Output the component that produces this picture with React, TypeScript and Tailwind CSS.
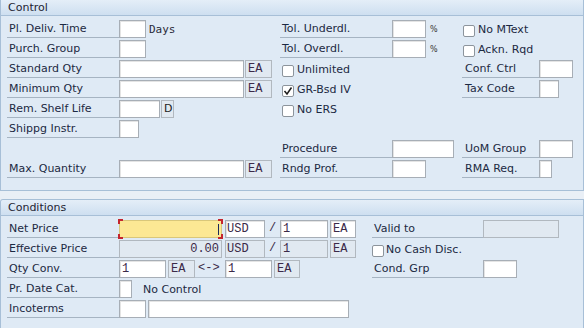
import React from "react";

const LBL = "h-[18px] border-b border-[#a6b4c2] pl-[2px] pt-[1px] leading-[16px] whitespace-nowrap";
const INP = "h-[18px] bg-white border border-[#a7aeb6] shadow-[inset_1px_1px_0_#e4e4e4]";
const GRY = "h-[18px] bg-[#e1e9f1] border border-[#b1b8bf]";
const MONO = "font-['Liberation_Mono',monospace] text-[12px] leading-[16px] text-[#3b2a48]";
const TXT = "pt-[1px] leading-[17px] whitespace-nowrap";

function Check({ checked = false, cls = "" }: { checked?: boolean; cls?: string }) {
  return (
    <span className={"mt-[5px] w-[12px] h-[12px] bg-white border border-[#8c949c] rounded-[2px] flex items-center justify-center " + cls}>
      {checked && (
        <svg width="10" height="10" viewBox="0 0 10 10">
          <polyline points="1.5,5 4,8 8.5,1.5" fill="none" stroke="#1d1d1d" strokeWidth="1.5" />
        </svg>
      )}
    </span>
  );
}

function Row({ children }: { children: React.ReactNode }) {
  return <div className="flex h-[18px] mb-[2px]">{children}</div>;
}

function Header({ title, top = false }: { title: string; top?: boolean }) {
  return (
    <div
      className={
        "h-[16px] bg-gradient-to-b from-[#e4eef8] to-[#cedff0] border-b border-[#a7bfd7] pl-[7px] pt-[1px] leading-[14px] text-[#1e2433] " +
        (top ? "" : "rounded-tl-[3px]")
      }
    >
      {title}
    </div>
  );
}

export default function App() {
  return (
    <div className="w-[584px] h-[328px] overflow-hidden bg-[#e9eff6] text-[11px] text-[#1c2942] font-['DejaVu_Sans',sans-serif]">
      {/* Control panel */}
      <div className="bg-[#dfeaf5] border-l border-r border-b border-[#a7bfd7]">
        <Header title="Control" top />
        <div className="pt-[4px] pb-[10px] pl-[6px]">
          {/* Row 1 */}
          <Row>
            <div className="flex w-[273px]">
              <div className={LBL + " w-[112px]"}>Pl. Deliv. Time</div>
              <div className={INP + " w-[27px]"} />
              <div className="ml-[3px] pt-[1px] font-['DejaVu_Sans_Mono',monospace] text-[11px] leading-[17px] text-[#2a2a3a]">Days</div>
            </div>
            <div className="flex w-[182px]">
              <div className={LBL + " w-[112px]"}>Tol. Underdl.</div>
              <div className={INP + " w-[34px]"} />
              <div className="ml-[4px] pt-[1px] text-[8px] leading-[17px] text-[#333]">%</div>
            </div>
            <div className="flex">
              <Check cls="ml-[1px]" />
              <span className={"ml-[3px] " + TXT}>No MText</span>
            </div>
          </Row>
          {/* Row 2 */}
          <Row>
            <div className="flex w-[273px]">
              <div className={LBL + " w-[112px]"}>Purch. Group</div>
              <div className={INP + " w-[27px]"} />
            </div>
            <div className="flex w-[182px]">
              <div className={LBL + " w-[112px]"}>Tol. Overdl.</div>
              <div className={INP + " w-[34px]"} />
              <div className="ml-[4px] pt-[1px] text-[8px] leading-[17px] text-[#333]">%</div>
            </div>
            <div className="flex">
              <Check cls="ml-[1px]" />
              <span className={"ml-[3px] " + TXT}>Ackn. Rqd</span>
            </div>
          </Row>
          {/* Row 3 */}
          <Row>
            <div className="flex w-[273px]">
              <div className={LBL + " w-[112px]"}>Standard Qty</div>
              <div className={INP + " w-[125px]"} />
              <div className={GRY + " ml-[1px] w-[27px] pl-[2px] " + MONO}>EA</div>
            </div>
            <div className="flex w-[182px]">
              <Check cls="ml-[2px]" />
              <span className={"ml-[3px] " + TXT}>Unlimited</span>
            </div>
            <div className="flex">
              <div className={LBL + " w-[77px] pl-[3px]"}>Conf. Ctrl</div>
              <div className={INP + " w-[34px]"} />
            </div>
          </Row>
          {/* Row 4 */}
          <Row>
            <div className="flex w-[273px]">
              <div className={LBL + " w-[112px]"}>Minimum Qty</div>
              <div className={INP + " w-[125px]"} />
              <div className={GRY + " ml-[1px] w-[27px] pl-[2px] " + MONO}>EA</div>
            </div>
            <div className="flex w-[182px]">
              <Check checked cls="ml-[2px]" />
              <span className={"ml-[3px] " + TXT}>GR-Bsd IV</span>
            </div>
            <div className="flex">
              <div className={LBL + " w-[77px] pl-[3px]"}>Tax Code</div>
              <div className={INP + " w-[20px]"} />
            </div>
          </Row>
          {/* Row 5 */}
          <Row>
            <div className="flex w-[273px]">
              <div className={LBL + " w-[112px]"}>Rem. Shelf Life</div>
              <div className={INP + " w-[41px]"} />
              <div className={GRY + " ml-[1px] w-[13px] pl-[2px] text-[11px] leading-[16px] text-[#222]"}>D</div>
            </div>
            <div className="flex w-[182px]">
              <Check cls="ml-[2px]" />
              <span className={"ml-[3px] " + TXT}>No ERS</span>
            </div>
          </Row>
          {/* Row 6 */}
          <Row>
            <div className="flex w-[273px]">
              <div className={LBL + " w-[112px]"}>Shippg Instr.</div>
              <div className={INP + " w-[20px]"} />
            </div>
          </Row>
          {/* Row 7 */}
          <Row>
            <div className="w-[273px]" />
            <div className="flex w-[182px]">
              <div className={LBL + " w-[112px]"}>Procedure</div>
              <div className={INP + " w-[62px]"} />
            </div>
            <div className="flex">
              <div className={LBL + " w-[77px] pl-[3px]"}>UoM Group</div>
              <div className={INP + " w-[34px]"} />
            </div>
          </Row>
          {/* Row 8 */}
          <Row>
            <div className="flex w-[273px]">
              <div className={LBL + " w-[112px]"}>Max. Quantity</div>
              <div className={INP + " w-[125px]"} />
              <div className={GRY + " ml-[1px] w-[27px] pl-[2px] " + MONO}>EA</div>
            </div>
            <div className="flex w-[182px]">
              <div className={LBL + " w-[112px]"}>Rndg Prof.</div>
              <div className={INP + " w-[34px]"} />
            </div>
            <div className="flex">
              <div className={LBL + " w-[77px] pl-[3px]"}>RMA Req.</div>
              <div className={INP + " w-[13px]"} />
            </div>
          </Row>
        </div>
      </div>

      <div className="h-[8px]" />

      {/* Conditions panel */}
      <div className="bg-[#dfeaf5] border-l border-r border-t border-[#a7bfd7] rounded-tl-[3px] h-[129px]">
        <Header title="Conditions" />
        <div className="pt-[4px] pl-[6px]">
          {/* Net Price */}
          <Row>
            <div className="flex w-[365px]">
              <div className={LBL + " w-[112px]"}>Net Price</div>
              <div className="relative w-[103px] h-[18px] bg-[#fce894] border border-[#d9c77a]">
                <span className="absolute -left-[2px] -top-[2px] w-[5px] h-[5px] border-l-2 border-t-2 border-[#c4262e]" />
                <span className="absolute -right-[2px] -top-[2px] w-[5px] h-[5px] border-r-2 border-t-2 border-[#c4262e]" />
                <span className="absolute -left-[2px] -bottom-[2px] w-[5px] h-[5px] border-l-2 border-b-2 border-[#c4262e]" />
                <span className="absolute -right-[2px] -bottom-[2px] w-[5px] h-[5px] border-r-2 border-b-2 border-[#c4262e]" />
                <span className="absolute right-[2px] top-[3px] w-[1px] h-[11px] bg-[#1b2a5a]" />
              </div>
              <div className={INP + " ml-[3px] w-[40px] pl-[1px] " + MONO}>USD</div>
              <div className={"w-[15px] h-[18px] border-b border-[#b9c5d1] text-center " + MONO}>/</div>
              <div className={INP + " w-[48px] pl-[2px] " + MONO}>1</div>
              <div className={INP + " ml-[2px] w-[26px] pl-[2px] " + MONO}>EA</div>
            </div>
            <div className="flex">
              <div className={LBL + " w-[111px]"}>Valid to</div>
              <div className={GRY + " w-[76px]"} />
            </div>
          </Row>
          {/* Effective Price */}
          <Row>
            <div className="flex w-[365px]">
              <div className={LBL + " w-[112px]"}>Effective Price</div>
              <div className={GRY + " w-[103px] pr-[2px] text-right " + MONO}>0.00</div>
              <div className={GRY + " ml-[3px] w-[40px] pl-[1px] " + MONO}>USD</div>
              <div className={"w-[15px] h-[18px] border-b border-[#b9c5d1] text-center " + MONO}>/</div>
              <div className={GRY + " w-[48px] pl-[2px] " + MONO}>1</div>
              <div className={GRY + " ml-[2px] w-[26px] pl-[2px] " + MONO}>EA</div>
            </div>
            <div className="flex">
              <Check />
              <span className={"ml-[2px] " + TXT}>No Cash Disc.</span>
            </div>
          </Row>
          {/* Qty Conv */}
          <Row>
            <div className="flex w-[365px]">
              <div className={LBL + " w-[112px]"}>Qty Conv.</div>
              <div className={INP + " w-[47px] pl-[2px] " + MONO}>1</div>
              <div className={GRY + " ml-[2px] w-[27px] pl-[2px] " + MONO}>EA</div>
              <div className={"w-[30px] h-[18px] border-b border-[#b9c5d1] pl-[3px] " + MONO}>&lt;-&gt;</div>
              <div className={INP + " w-[47px] pl-[2px] " + MONO}>1</div>
              <div className={GRY + " ml-[2px] w-[26px] pl-[2px] " + MONO}>EA</div>
            </div>
            <div className="flex">
              <div className={LBL + " w-[111px]"}>Cond. Grp</div>
              <div className={INP + " w-[34px]"} />
            </div>
          </Row>
          {/* Pr. Date Cat */}
          <Row>
            <div className="flex w-[365px]">
              <div className={LBL + " w-[112px]"}>Pr. Date Cat.</div>
              <div className={INP + " w-[13px]"} />
              <div className={"ml-[11px] " + TXT}>No Control</div>
            </div>
          </Row>
          {/* Incoterms */}
          <Row>
            <div className="flex w-[365px]">
              <div className={LBL + " w-[112px]"}>Incoterms</div>
              <div className={INP + " w-[27px]"} />
              <div className={INP + " ml-[2px] w-[201px]"} />
            </div>
          </Row>
        </div>
      </div>
    </div>
  );
}
